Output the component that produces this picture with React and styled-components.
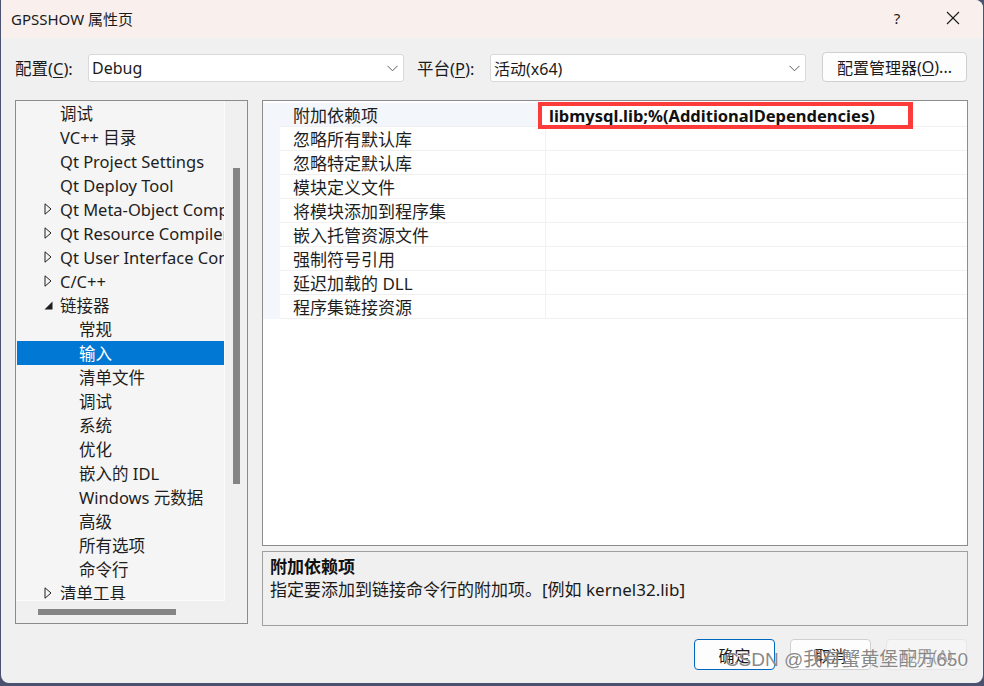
import React from "react";
import styled, { createGlobalStyle } from "styled-components";

const GlobalStyle = createGlobalStyle`
  html, body {
    margin: 0;
    padding: 0;
    background: #4b5270;
  }
  body {
    font-family: "Noto Sans", "Noto Sans CJK SC", sans-serif;
    font-size: 16px;
    color: #1b1b1b;
  }
  * { box-sizing: border-box; }
`;

const treeItems = [
  { level: 1, text: "调试" },
  { level: 1, text: "VC++ 目录" },
  { level: 1, text: "Qt Project Settings" },
  { level: 1, text: "Qt Deploy Tool" },
  { level: 1, text: "Qt Meta-Object Compiler", arrow: "closed" },
  { level: 1, text: "Qt Resource Compiler", arrow: "closed" },
  { level: 1, text: "Qt User Interface Compiler", arrow: "closed" },
  { level: 1, text: "C/C++", arrow: "closed" },
  { level: 1, text: "链接器", arrow: "open" },
  { level: 2, text: "常规" },
  { level: 2, text: "输入", selected: true },
  { level: 2, text: "清单文件" },
  { level: 2, text: "调试" },
  { level: 2, text: "系统" },
  { level: 2, text: "优化" },
  { level: 2, text: "嵌入的 IDL" },
  { level: 2, text: "Windows 元数据" },
  { level: 2, text: "高级" },
  { level: 2, text: "所有选项" },
  { level: 2, text: "命令行" },
  { level: 1, text: "清单工具", arrow: "closed" },
];

const props = [
  "附加依赖项",
  "忽略所有默认库",
  "忽略特定默认库",
  "模块定义文件",
  "将模块添加到程序集",
  "嵌入托管资源文件",
  "强制符号引用",
  "延迟加载的 DLL",
  "程序集链接资源",
];

const Chevron = () => (
  <svg width="11" height="7" viewBox="0 0 11 7">
    <polyline points="0.5,0.8 5.5,5.8 10.5,0.8" fill="none" stroke="#5c5c5c" strokeWidth="1" />
  </svg>
);

const Expander = ({ kind }) => {
  if (kind === "closed")
    return (
      <svg width="8" height="12" viewBox="0 0 8 12">
        <polygon points="1,0.8 7,6 1,11.2" fill="none" stroke="#1e1e1e" strokeWidth="1" />
      </svg>
    );
  if (kind === "open")
    return (
      <svg width="9" height="9" viewBox="0 0 9 9">
        <polygon points="8.5,0.5 8.5,8.5 0.5,8.5" fill="#1e1e1e" />
      </svg>
    );
  return null;
};

const App = () => {
  return (
    <>
      <GlobalStyle />
      <Window>
        <TitleBar>
          <Title>GPSSHOW 属性页</Title>
          <TitleButtons>
            <HelpMark>?</HelpMark>
            <CloseMark>
              <svg width="14" height="14" viewBox="0 0 14 14">
                <line x1="1" y1="1" x2="13" y2="13" stroke="#1a1a1a" strokeWidth="1.1" />
                <line x1="13" y1="1" x2="1" y2="13" stroke="#1a1a1a" strokeWidth="1.1" />
              </svg>
            </CloseMark>
          </TitleButtons>
        </TitleBar>

        <Body>
          <ConfigRow>
            <FieldLabel>
              配置(<u>C</u>):
            </FieldLabel>
            <Select>
              <span>Debug</span>
              <Chevron />
            </Select>
            <FieldLabel $gap>
              平台(<u>P</u>):
            </FieldLabel>
            <Select>
              <span>活动(x64)</span>
              <Chevron />
            </Select>
            <ManagerButton>
              配置管理器(<u>O</u>)...
            </ManagerButton>
          </ConfigRow>

          <Main>
            <TreePanel>
              <TreeList>
                {treeItems.map((item, i) => (
                  <TreeRow key={i} $level={item.level} $selected={item.selected}>
                    <ExpanderSlot>
                      <Expander kind={item.arrow} />
                    </ExpanderSlot>
                    <TreeText>{item.text}</TreeText>
                  </TreeRow>
                ))}
              </TreeList>
              <VScroll>
                <VThumb />
              </VScroll>
              <HScroll>
                <HThumb />
              </HScroll>
              <ScrollCorner />
            </TreePanel>

            <RightColumn>
              <PropGrid>
                {props.map((name, i) => (
                  <PropRow key={name}>
                    <Gutter />
                    <PropName $active={i === 0}>{name}</PropName>
                    <PropValue>
                      {i === 0 && (
                        <Highlight>libmysql.lib;%(AdditionalDependencies)</Highlight>
                      )}
                    </PropValue>
                  </PropRow>
                ))}
              </PropGrid>
              <DescPanel>
                <DescTitle>附加依赖项</DescTitle>
                <DescText>指定要添加到链接命令行的附加项。[例如 kernel32.lib]</DescText>
              </DescPanel>
            </RightColumn>
          </Main>

          <Footer>
            <DialogButton $primary>确定</DialogButton>
            <DialogButton>取消</DialogButton>
            <DialogButton $disabled>应用(A)</DialogButton>
            <Watermark>CSDN @我有蟹黄堡配方650</Watermark>
          </Footer>
        </Body>
      </Window>
    </>
  );
};

const Window = styled.div`
  position: relative;
  width: 982px;
  height: 683px;
  margin-left: 1px;
  background: #f0f0f0;
  border-radius: 0 8px 8px 8px;
  overflow: hidden;
  display: flex;
  flex-direction: column;
`;

const TitleBar = styled.div`
  height: 38px;
  flex-shrink: 0;
  display: flex;
  align-items: center;
  justify-content: space-between;
  padding-left: 10px;
  background: #f9f0ed;
`;

const Title = styled.div`
  font-size: 15px;
  color: #1a1a1a;
  margin-top: -2px;
`;

const TitleButtons = styled.div`
  display: flex;
  align-items: center;
  height: 100%;
`;

const HelpMark = styled.div`
  width: 56px;
  text-align: center;
  font-size: 15px;
  color: #1a1a1a;
  margin-top: -2px;
`;

const CloseMark = styled.div`
  width: 56px;
  height: 100%;
  display: flex;
  align-items: center;
  justify-content: center;
  margin-top: -3px;
  margin-right: 2px;
`;

const Body = styled.div`
  flex: 1;
  display: flex;
  flex-direction: column;
  padding: 14px 15px 0 14px;
`;

const ConfigRow = styled.div`
  height: 30px;
  display: flex;
  align-items: center;
`;

const FieldLabel = styled.div`
  width: ${(p) => (p.$gap ? "86px" : "73px")};
  padding-left: ${(p) => (p.$gap ? "13px" : "0")};
  padding-top: 2px;
  font-size: 16.5px;
  color: #1b1b1b;
  white-space: nowrap;
  u {
    text-decoration-thickness: 1px;
    text-underline-offset: 2px;
  }
`;

const Select = styled.div`
  width: 316px;
  height: 28px;
  margin-top: 2px;
  display: flex;
  align-items: center;
  justify-content: space-between;
  padding: 0 5px 0 3px;
  background: #ffffff;
  border: 1px solid #d9d9d9;
  border-radius: 3px;
  font-size: 16px;
  color: #1b1b1b;
`;

const ManagerButton = styled.div`
  margin-left: 16px;
  width: 145px;
  height: 30px;
  display: flex;
  align-items: center;
  justify-content: center;
  background: #fdfdfd;
  border: 1px solid #d0d0d0;
  border-radius: 4px;
  font-size: 16px;
  color: #1b1b1b;
  u {
    text-decoration-thickness: 1px;
    text-underline-offset: 2px;
  }
`;

const Main = styled.div`
  margin-top: 18px;
  display: flex;
  gap: 14px;
  align-items: flex-start;
`;

const TreePanel = styled.div`
  width: 233px;
  height: 524px;
  border: 1px solid #8c8c8c;
  display: grid;
  grid-template-columns: 1fr 22px;
  grid-template-rows: 1fr 22px;
  background: #f0f0f0;
`;

const TreeList = styled.div`
  background: #f5f5f5;
  overflow: hidden;
  border-right: 1px solid #fbfbfb;
  border-bottom: 1px solid #fbfbfb;
`;

const TreeRow = styled.div`
  height: 24px;
  display: flex;
  align-items: center;
  padding-left: ${(p) => 27 + (p.$level - 1) * 19}px;
  margin-left: 1px;
  white-space: nowrap;
  background: ${(p) => (p.$selected ? "#0078d4" : "transparent")};
  color: ${(p) => (p.$selected ? "#ffffff" : "#1e1e1e")};
`;

const ExpanderSlot = styled.div`
  width: 16px;
  flex-shrink: 0;
  display: flex;
  align-items: center;
  svg { display: block; }
`;

const TreeText = styled.span`
  font-size: 16.5px;
  line-height: 24px;
  padding-top: 2px;
`;

const VScroll = styled.div`
  position: relative;
  padding: 67px 0 0 8px;
`;

const VThumb = styled.div`
  width: 7px;
  height: 316px;
  background: #858585;
`;

const HScroll = styled.div`
  padding: 8px 0 0 22px;
`;

const HThumb = styled.div`
  width: 138px;
  height: 6px;
  background: #858585;
`;

const ScrollCorner = styled.div``;

const RightColumn = styled.div`
  flex: 1;
  display: flex;
  flex-direction: column;
  gap: 5px;
`;

const PropGrid = styled.div`
  height: 446px;
  border: 1px solid #8c8c8c;
  background: #ffffff;
  padding-top: 2px;
`;

const PropRow = styled.div`
  height: 24px;
  display: grid;
  grid-template-columns: 17px 266px 1fr;
`;

const Gutter = styled.div`
  background: #f3f6fb;
`;

const PropName = styled.div`
  padding-left: 13px;
  padding-top: 1px;
  line-height: 23px;
  font-size: 17px;
  color: #1e1e1e;
  background: ${(p) => (p.$active ? "#f3f6fb" : "#ffffff")};
  border-bottom: 1px solid #f0f0f0;
  border-right: 1px solid #f0f0f0;
  white-space: nowrap;
  overflow: hidden;
`;

const PropValue = styled.div`
  position: relative;
  border-bottom: 1px solid #f0f0f0;
`;

const Highlight = styled.div`
  position: absolute;
  left: -8px;
  top: -1px;
  width: 375px;
  height: 27px;
  border: 4px solid #fd3b3b;
  border-right-width: 5px;
  background: #ffffff;
  padding-left: 7px;
  font-size: 16.5px;
  font-weight: 700;
  line-height: 19px;
  color: #111111;
  white-space: nowrap;
  overflow: hidden;
`;

const DescPanel = styled.div`
  height: 75px;
  border: 1px solid #a0a0a0;
  background: #f0f0f0;
  padding: 4px 7px;
`;

const DescTitle = styled.div`
  font-size: 17px;
  font-weight: 700;
  line-height: 22px;
  color: #111111;
`;

const DescText = styled.div`
  font-size: 17px;
  line-height: 23px;
  color: #1b1b1b;
`;

const Footer = styled.div`
  position: relative;
  margin-top: 13px;
  display: flex;
  justify-content: flex-end;
  gap: 15px;
  padding-right: 1px;
`;

const DialogButton = styled.div`
  width: 81px;
  height: 31px;
  display: flex;
  align-items: center;
  justify-content: center;
  border-radius: 4px;
  font-size: 16px;
  background: ${(p) => (p.$disabled ? "#f5f5f5" : "#fdfdfd")};
  color: ${(p) => (p.$disabled ? "#a0a0a0" : "#1b1b1b")};
  border: 1px solid
    ${(p) => (p.$primary ? "#0067c0" : p.$disabled ? "#e6e6e6" : "#d0d0d0")};
`;

const Watermark = styled.div`
  position: absolute;
  right: 0;
  top: 5px;
  font-family: "Liberation Sans", "Noto Sans CJK SC", sans-serif;
  font-size: 19px;
  color: rgba(105, 105, 105, 0.8);
  text-shadow: 0 0 1px rgba(255, 255, 255, 0.9);
  white-space: nowrap;
  pointer-events: none;
`;

export default App;
